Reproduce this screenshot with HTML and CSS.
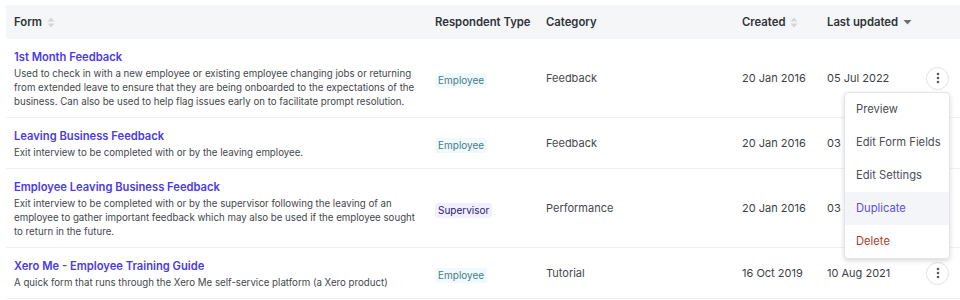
FILE: index.html
```html
<!DOCTYPE html>
<html lang="en">
<head>
<meta charset="utf-8">
<title>Forms</title>
<link rel="stylesheet" href="styles.css">
</head>
<body>
<div class="page">
  <div class="table">
    <div class="row head">
      <div class="cell">Form <span class="sort"><svg width="8" height="11" viewBox="0 0 8 11"><path d="M4 0.5 L7.5 4.5 H0.5 Z M4 10.5 L7.5 6.5 H0.5 Z" fill="#d3d6db"/></svg></span></div>
      <div class="cell">Respondent Type</div>
      <div class="cell">Category</div>
      <div class="cell">Created <span class="sort"><svg width="8" height="11" viewBox="0 0 8 11"><path d="M4 0.5 L7.5 4.5 H0.5 Z M4 10.5 L7.5 6.5 H0.5 Z" fill="#d3d6db"/></svg></span></div>
      <div class="cell">Last updated <span class="sort"><svg width="9" height="6" viewBox="0 0 9 6"><path d="M0.5 1 H8.5 L4.5 5.5 Z" fill="#6b7078"/></svg></span></div>
      <div class="cell"></div>
    </div>

    <div class="row">
      <div class="cell form">
        <a class="title" href="#">1st Month Feedback</a>
        <p class="desc">Used to check in with a new employee or existing employee changing jobs or returning from extended leave to ensure that they are being onboarded to the expectations of the business. Can also be used to help flag issues early on to facilitate prompt resolution.</p>
      </div>
      <div class="cell"><span class="badge emp">Employee</span></div>
      <div class="cell cat">Feedback</div>
      <div class="cell date">20 Jan 2016</div>
      <div class="cell date">05 Jul 2022</div>
      <div class="cell act"><button class="kebab"><svg width="4" height="12" viewBox="0 0 4 12"><circle cx="2" cy="2" r="1.3" fill="#555b63"/><circle cx="2" cy="6" r="1.3" fill="#555b63"/><circle cx="2" cy="10" r="1.3" fill="#555b63"/></svg></button></div>
    </div>

    <div class="row">
      <div class="cell form">
        <a class="title" href="#">Leaving Business Feedback</a>
        <p class="desc">Exit interview to be completed with or by the leaving employee.</p>
      </div>
      <div class="cell"><span class="badge emp">Employee</span></div>
      <div class="cell cat">Feedback</div>
      <div class="cell date">20 Jan 2016</div>
      <div class="cell date">03 Jul 2022</div>
      <div class="cell act"><button class="kebab"><svg width="4" height="12" viewBox="0 0 4 12"><circle cx="2" cy="2" r="1.3" fill="#555b63"/><circle cx="2" cy="6" r="1.3" fill="#555b63"/><circle cx="2" cy="10" r="1.3" fill="#555b63"/></svg></button></div>
    </div>

    <div class="row">
      <div class="cell form">
        <a class="title" href="#">Employee Leaving Business Feedback</a>
        <p class="desc">Exit interview to be completed with or by the supervisor following the leaving of an employee to gather important feedback which may also be used if the employee sought to return in the future.</p>
      </div>
      <div class="cell"><span class="badge sup">Supervisor</span></div>
      <div class="cell cat">Performance</div>
      <div class="cell date">20 Jan 2016</div>
      <div class="cell date">03 Jul 2022</div>
      <div class="cell act"><button class="kebab"><svg width="4" height="12" viewBox="0 0 4 12"><circle cx="2" cy="2" r="1.3" fill="#555b63"/><circle cx="2" cy="6" r="1.3" fill="#555b63"/><circle cx="2" cy="10" r="1.3" fill="#555b63"/></svg></button></div>
    </div>

    <div class="row">
      <div class="cell form">
        <a class="title" href="#">Xero Me - Employee Training Guide</a>
        <p class="desc">A quick form that runs through the Xero Me self-service platform (a Xero product)</p>
      </div>
      <div class="cell"><span class="badge emp">Employee</span></div>
      <div class="cell cat">Tutorial</div>
      <div class="cell date">16 Oct 2019</div>
      <div class="cell date">10 Aug 2021</div>
      <div class="cell act"><button class="kebab"><svg width="4" height="12" viewBox="0 0 4 12"><circle cx="2" cy="2" r="1.3" fill="#555b63"/><circle cx="2" cy="6" r="1.3" fill="#555b63"/><circle cx="2" cy="10" r="1.3" fill="#555b63"/></svg></button></div>
    </div>

    <ul class="menu">
      <li>Preview</li>
      <li>Edit Form Fields</li>
      <li>Edit Settings</li>
      <li class="active">Duplicate</li>
      <li class="danger">Delete</li>
    </ul>
  </div>
</div>
</body>
</html>
```

FILE: styles.css
```css
* { box-sizing: border-box; }
html, body { margin: 0; padding: 0; background: #fff; }
body {
  font-family: Inter, "Noto Sans", sans-serif;
  color: #3b3f45;
  overflow: hidden;
}
.page { padding: 5px 0 0 6px; }
.table { position: relative; width: 954px; }
.row {
  display: grid;
  grid-template-columns: 421px 111px 196px 85px 96px 45px;
  align-items: center;
  border-bottom: 1px solid #f0f1f3;
}
.row.head {
  background: #f5f6f8;
  height: 34px;
  border-bottom: none;
  font-size: 11.3px;
  font-weight: 600;
  color: #2f3338;
  white-space: nowrap;
}
.cell { padding: 0 8px; }
.head .cell { display: flex; align-items: center; gap: 5px; }
.sort { display: inline-flex; align-items: center; }
.form { padding-top: 9px; padding-bottom: 8px; }
.title {
  display: block;
  font-size: 11.2px;
  font-weight: 600;
  line-height: 18px;
  color: #4a3be8;
  text-decoration: none;
}
.desc {
  margin: 1px 0 0;
  font-size: 9.7px;
  line-height: 14px;
  color: #44474c;
}
.badge {
  display: inline-block;
  font-size: 10px;
  line-height: 15px;
  padding: 0 3px;
  border-radius: 3px;
}
.badge.emp { background: #eefafd; color: #4c7a86; }
.badge.sup { background: #f1effd; color: #27226e; }
.cat { font-size: 11px; color: #44484e; white-space: nowrap; }
.date { font-size: 11px; color: #3b3f45; white-space: nowrap; }
.act { display: flex; justify-content: center; padding: 0; }
.kebab {
  width: 23px; height: 23px;
  border-radius: 50%;
  border: 1px solid #dfe2e6;
  background: #fff;
  display: flex; align-items: center; justify-content: center;
  padding: 0;
}
.menu {
  position: absolute;
  left: 838px;
  top: 87px;
  width: 106px;
  margin: 0;
  padding: 0;
  list-style: none;
  background: #fff;
  border: 1px solid #e3e5e8;
  border-radius: 4px;
  box-shadow: 0 2px 5px rgba(0,0,0,0.15);
  overflow: hidden;
}
.menu li {
  height: 33px;
  line-height: 33px;
  padding: 0 11px;
  font-size: 11.2px;
  color: #4a4e55;
  white-space: nowrap;
}
.menu li.active { background: #f4f5f8; color: #5b4cf0; }
.menu li.danger { color: #c0392b; }
```
